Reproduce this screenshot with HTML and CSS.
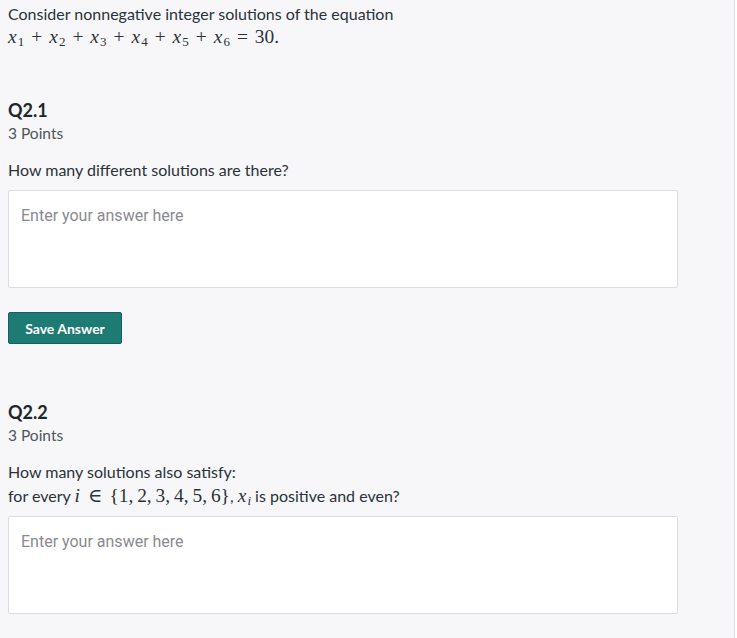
FILE: index.html
```html
<!DOCTYPE html>
<html lang="en">
<head>
<meta charset="utf-8">
<title>Question 2</title>
<link rel="stylesheet" href="styles.css">
</head>
<body>
<main class="page">
  <section class="intro">
    <p>Consider nonnegative integer solutions of the equation</p>
    <p class="math-line"><span class="math"><i class="v">x</i><sub>1</sub><span class="op">+</span><i class="v">x</i><sub>2</sub><span class="op">+</span><i class="v">x</i><sub>3</sub><span class="op">+</span><i class="v">x</i><sub>4</sub><span class="op">+</span><i class="v">x</i><sub>5</sub><span class="op">+</span><i class="v">x</i><sub>6</sub><span class="op">=</span>30.</span></p>
  </section>

  <section class="question q1">
    <h2 class="q-title">Q2.1</h2>
    <div class="q-points">3 Points</div>
    <p class="q-text">How many different solutions are there?</p>
    <textarea class="answer" placeholder="Enter your answer here"></textarea>
    <button class="save" type="button">Save Answer</button>
  </section>

  <section class="question q2">
    <h2 class="q-title">Q2.2</h2>
    <div class="q-points">3 Points</div>
    <p class="q-text">How many solutions also satisfy:<br>for every <span class="math"><i class="v">i</i><span class="op">∈</span>{1<span class="p">,</span>2<span class="p">,</span>3<span class="p">,</span>4<span class="p">,</span>5<span class="p">,</span>6}</span>, <span class="math"><i class="v">x</i><sub><i>i</i></sub></span> is positive and even?</p>
    <textarea class="answer" placeholder="Enter your answer here"></textarea>
  </section>
</main>
</body>
</html>
```

FILE: styles.css
```css
html, body {
  margin: 0;
  padding: 0;
  background: #ffffff;
}

.page {
  box-sizing: border-box;
  width: 735px;
  min-height: 638px;
  padding: 2px 8px 0 8px;
  background: #f7f7fa;
  border-right: 1px solid #dcdce2;
  font-family: "Lato", "Open Sans", sans-serif;
  font-size: 16px;
  color: #2b3238;
}

.intro p {
  margin: 0;
  line-height: 23px;
}

.math {
  font-family: "Liberation Serif", "DejaVu Serif", serif;
  font-size: 19.4px;
  color: #2b3238;
  white-space: nowrap;
}

.math i {
  font-style: italic;
}

.math .v {
  margin-right: 0.06em;
}

.math .op {
  margin: 0 0.36em;
}

.math .p {
  margin-right: 0.2em;
}

.math sub {
  font-size: 13px;
  vertical-align: -3px;
  line-height: 0;
}

.question {
  display: flex;
  flex-direction: column;
  align-items: flex-start;
}

.q1 {
  margin-top: 50px;
}

.q2 {
  margin-top: 56px;
}

.q-title {
  margin: 0;
  font-size: 18px;
  font-weight: 700;
  line-height: 24px;
  color: #1f2529;
}

.q-points {
  font-size: 15.5px;
  line-height: 22px;
  color: #50555a;
}

.q-text {
  margin: 14px 0 0 0;
  line-height: 24px;
}

.answer {
  box-sizing: border-box;
  width: 670px;
  height: 98px;
  margin-top: 8px;
  padding: 15px 12px;
  border: 1px solid #dcdce3;
  border-radius: 2px;
  background: #ffffff;
  font-family: "Roboto", sans-serif;
  font-size: 16px;
  line-height: 20px;
  color: #2b3238;
  resize: none;
  outline: none;
}

.answer::placeholder {
  color: #8a8a90;
}

.save {
  margin-top: 24px;
  width: 114px;
  height: 32px;
  padding: 0;
  border: 1px solid #15615b;
  border-radius: 2px;
  background: #1e7b73;
  color: #ffffff;
  font-family: "Lato", "Open Sans", sans-serif;
  font-size: 14px;
  font-weight: 700;
  cursor: pointer;
}
```
